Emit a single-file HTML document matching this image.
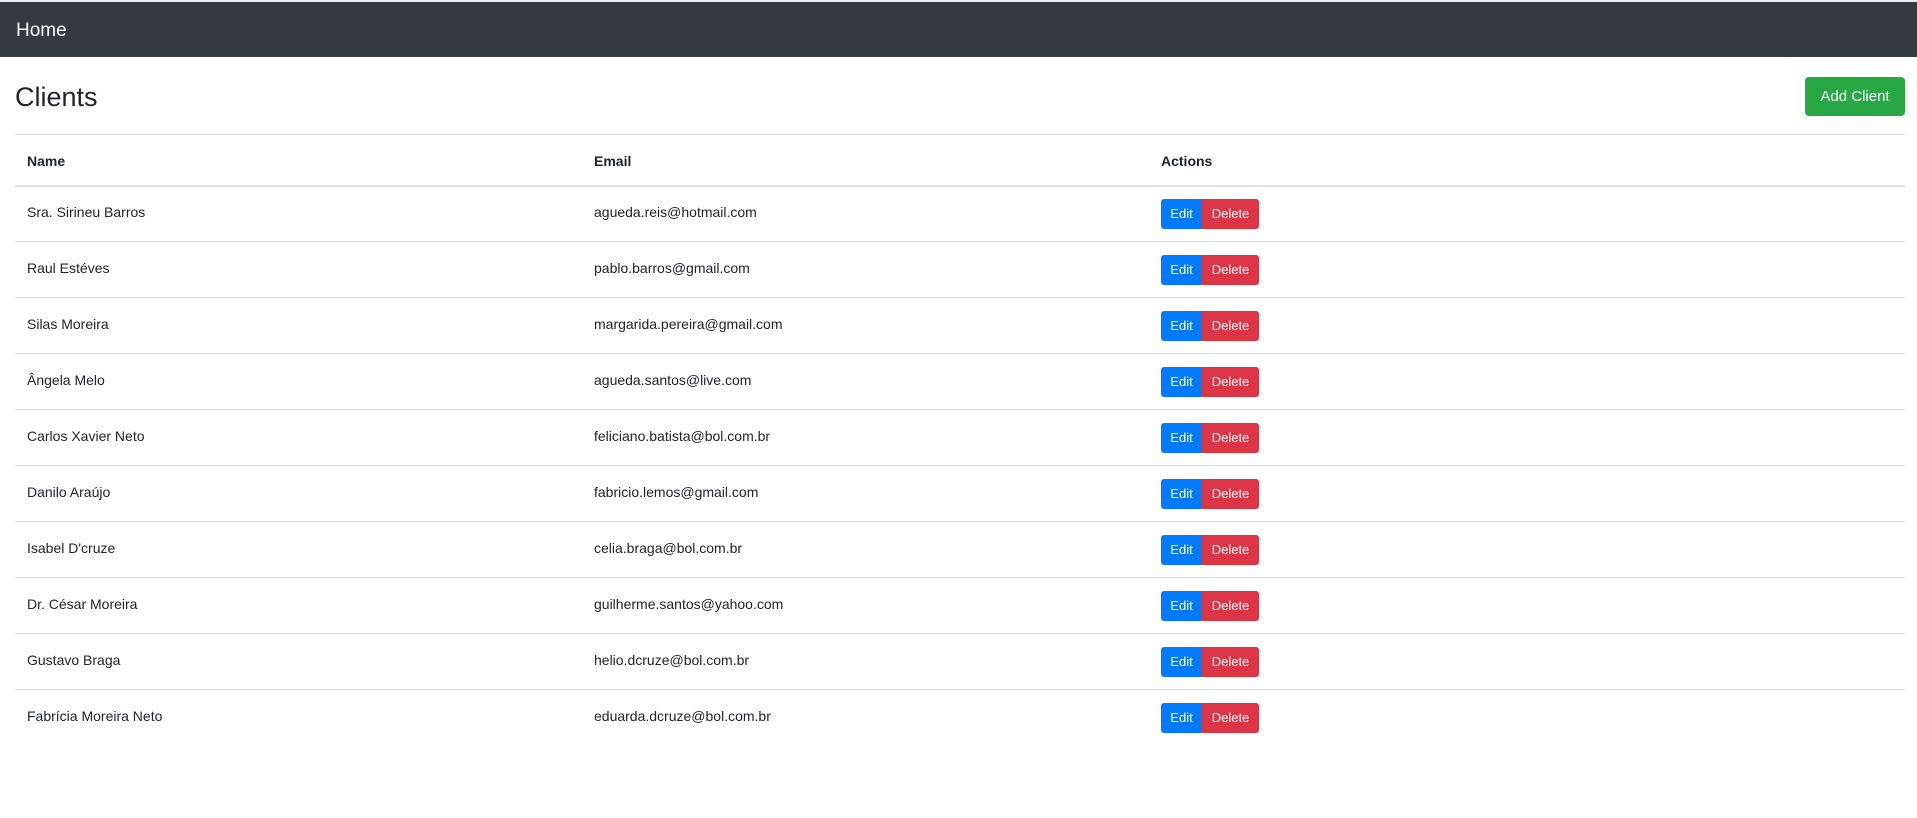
<!DOCTYPE html>
<html><head><meta charset="utf-8"><style>
*{box-sizing:border-box;margin:0;padding:0}
body{width:1917px;height:818px;background:#fff;font-family:"Liberation Sans",sans-serif;color:#212529;overflow:hidden}
.top{height:2px;background:#e9ecef}
nav{height:55px;background:#343a40;padding:3px 16px 0;display:flex;align-items:center}
nav span{color:#fff;font-size:19px}
h3{position:absolute;left:15px;top:81px;font-weight:500;font-size:27px;line-height:32px}
.add{position:absolute;left:1805px;top:77px;width:100px;height:39px;background:#28a745;border-radius:4px;color:#fff;font-size:15px;display:flex;align-items:center;justify-content:center}
table{position:absolute;left:15px;top:134px;width:1890px;border-collapse:collapse;font-size:14px}
th{text-align:left;font-weight:bold;height:51px;border-top:1px solid #dee2e6;border-bottom:2px solid #dee2e6;padding:2px 12px 0}
td{height:56px;border-top:1px solid #dee2e6;padding:0 12px;vertical-align:middle}
td .t{position:relative;top:-2px}
tbody tr:first-child td{border-top:0}
.c1{width:567px}.c2{width:567px}
.b{display:inline-flex;align-items:center;justify-content:center;height:30px;color:#fff;font-size:13px;vertical-align:middle}
.e{width:41px;background:#007bff;border-radius:3px 0 0 3px}
.d{width:57px;background:#dc3545;border-radius:0 3px 3px 0}
</style></head><body>
<div class="top"></div>
<nav><span>Home</span></nav>
<h3>Clients</h3>
<div class="add">Add Client</div>
<table>
<thead><tr><th class="c1">Name</th><th class="c2">Email</th><th>Actions</th></tr></thead>
<tbody>
<tr><td><span class="t">Sra. Sirineu Barros</span></td><td><span class="t">agueda.reis@hotmail.com</span></td><td><span class="b e">Edit</span><span class="b d">Delete</span></td></tr>
<tr><td><span class="t">Raul Estéves</span></td><td><span class="t">pablo.barros@gmail.com</span></td><td><span class="b e">Edit</span><span class="b d">Delete</span></td></tr>
<tr><td><span class="t">Silas Moreira</span></td><td><span class="t">margarida.pereira@gmail.com</span></td><td><span class="b e">Edit</span><span class="b d">Delete</span></td></tr>
<tr><td><span class="t">Ângela Melo</span></td><td><span class="t">agueda.santos@live.com</span></td><td><span class="b e">Edit</span><span class="b d">Delete</span></td></tr>
<tr><td><span class="t">Carlos Xavier Neto</span></td><td><span class="t">feliciano.batista@bol.com.br</span></td><td><span class="b e">Edit</span><span class="b d">Delete</span></td></tr>
<tr><td><span class="t">Danilo Araújo</span></td><td><span class="t">fabricio.lemos@gmail.com</span></td><td><span class="b e">Edit</span><span class="b d">Delete</span></td></tr>
<tr><td><span class="t">Isabel D'cruze</span></td><td><span class="t">celia.braga@bol.com.br</span></td><td><span class="b e">Edit</span><span class="b d">Delete</span></td></tr>
<tr><td><span class="t">Dr. César Moreira</span></td><td><span class="t">guilherme.santos@yahoo.com</span></td><td><span class="b e">Edit</span><span class="b d">Delete</span></td></tr>
<tr><td><span class="t">Gustavo Braga</span></td><td><span class="t">helio.dcruze@bol.com.br</span></td><td><span class="b e">Edit</span><span class="b d">Delete</span></td></tr>
<tr><td><span class="t">Fabrícia Moreira Neto</span></td><td><span class="t">eduarda.dcruze@bol.com.br</span></td><td><span class="b e">Edit</span><span class="b d">Delete</span></td></tr>
</tbody></table>
</body></html>
